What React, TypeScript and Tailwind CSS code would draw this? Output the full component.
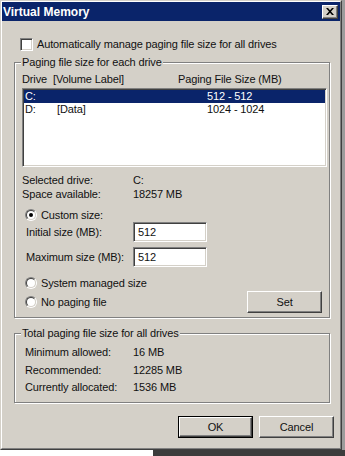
import React from "react";

const raised =
  "border border-t-white border-l-white border-r-[#404040] border-b-[#404040] shadow-[inset_-1px_-1px_0_#808080] bg-[#D4D0C8]";
const sunken =
  "border border-t-[#808080] border-l-[#808080] border-r-white border-b-white shadow-[inset_1px_1px_0_#404040,inset_-1px_-1px_0_#D4D0C8]";

function Radio({ checked }: { checked?: boolean }) {
  return (
    <div className="w-[12px] h-[12px] rounded-full border border-t-[#808080] border-l-[#808080] border-r-white border-b-white shrink-0">
      <div className="w-full h-full rounded-full border border-t-[#404040] border-l-[#404040] border-r-[#D4D0C8] border-b-[#D4D0C8] bg-white flex items-center justify-center">
        {checked && <div className="w-[4px] h-[4px] rounded-full bg-black" />}
      </div>
    </div>
  );
}

function Group({
  title,
  className,
  children,
}: {
  title: string;
  className: string;
  children: React.ReactNode;
}) {
  return (
    <div
      className={
        "relative border border-[#808080] shadow-[inset_1px_1px_0_#fff,1px_1px_0_#fff] flex flex-col " +
        className
      }
    >
      <span className="absolute left-[6px] top-[-7px] px-[1px] bg-[#D4D0C8] leading-[13px]">
        {title}
      </span>
      {children}
    </div>
  );
}

export default function App() {
  return (
    <div
      className="w-[345px] h-[456px] flex flex-col bg-[#9c9c9c] text-[#111] text-[11px] leading-[13px] tracking-[-0.13px] overflow-hidden"
      style={{ fontFamily: '"Liberation Sans", Arial, sans-serif' }}
    >
      <div className="flex h-[450px]">
        <div className="w-[342px] h-[450px] bg-[#D4D0C8] border border-t-[#D4D0C8] border-l-[#D4D0C8] border-r-[#404040] border-b-[#404040]">
          <div className="h-full border border-t-white border-l-white border-r-[#808080] border-b-[#808080] flex flex-col">
            {/* Title bar */}
            <div className="h-[19px] bg-[#0A246A] flex items-center justify-between pl-[1px] pr-[2px]">
              <span className="text-white font-bold text-[12px] leading-[14px] tracking-normal">
                Virtual Memory
              </span>
              <div className={"w-[16px] h-[14px] flex items-center justify-center " + raised}>
                <svg width="8" height="7" viewBox="0 0 8 7">
                  <path
                    d="M0 0h2l2 2.3L6 0h2L5 3.5 8 7H6L4 4.7 2 7H0l3-3.5z"
                    fill="#000"
                  />
                </svg>
              </div>
            </div>

            {/* Auto manage */}
            <div className="mt-[16px] h-[14px] pl-[18px] flex items-center gap-[4px]">
              <div className={"w-[13px] h-[13px] bg-white " + sunken} />
              <span>Automatically manage paging file size for all drives</span>
            </div>

            {/* Group 1 */}
            <Group
              title="Paging file size for each drive"
              className="mt-[11px] ml-[12px] w-[316px] h-[256px] pl-[7px] pr-[7px]"
            >
              <div className="mt-[10px] h-[12px] flex items-center">
                <span className="w-[31px]">Drive</span>
                <span className="w-[125px]">[Volume Label]</span>
                <span>Paging File Size (MB)</span>
              </div>
              <div className={"mt-[3px] h-[79px] w-[305px] bg-white pt-[1px] flex flex-col " + sunken}>
                <div className="mx-[1px] h-[13px] bg-[#0A246A] text-white flex items-center pl-[1px]">
                  <span className="w-[32px]">C:</span>
                  <span className="w-[150px]"></span>
                  <span>512 - 512</span>
                </div>
                <div className="mx-[1px] h-[13px] flex items-center pl-[1px]">
                  <span className="w-[32px]">D:</span>
                  <span className="w-[150px]">[Data]</span>
                  <span>1024 - 1024</span>
                </div>
              </div>
              <div className="mt-[6px] h-[14px] flex items-center">
                <span className="w-[111px]">Selected drive:</span>
                <span>C:</span>
              </div>
              <div className="h-[14px] flex items-center">
                <span className="w-[111px]">Space available:</span>
                <span>18257 MB</span>
              </div>
              <div className="mt-[7px] h-[14px] flex items-center gap-[4px] pl-[3px]">
                <Radio checked />
                <span>Custom size:</span>
              </div>
              <div className="h-[20px] flex items-center pl-[4px]">
                <span className="w-[107px]">Initial size (MB):</span>
                <div className={"w-[74px] h-[20px] bg-white flex items-center pl-[4px] " + sunken}>
                  512
                </div>
              </div>
              <div className="mt-[5px] h-[20px] flex items-center pl-[4px]">
                <span className="w-[107px]">Maximum size (MB):</span>
                <div className={"w-[74px] h-[20px] bg-white flex items-center pl-[4px] " + sunken}>
                  512
                </div>
              </div>
              <div className="mt-[9px] h-[14px] flex items-center gap-[4px] pl-[3px]">
                <Radio />
                <span>System managed size</span>
              </div>
              <div className="mt-[1px] h-[22px] flex items-center justify-between pl-[3px]">
                <div className="flex items-center gap-[4px]">
                  <Radio />
                  <span>No paging file</span>
                </div>
                <div className={"w-[75px] h-[22px] flex items-center justify-center " + raised}>
                  Set
                </div>
              </div>
            </Group>

            {/* Group 2 */}
            <Group
              title="Total paging file size for all drives"
              className="mt-[15px] ml-[12px] w-[316px] h-[70px] pl-[10px]"
            >
              <div className="mt-[11px] h-[14px] flex items-center">
                <span className="w-[108px]">Minimum allowed:</span>
                <span>16 MB</span>
              </div>
              <div className="mt-[4px] h-[14px] flex items-center">
                <span className="w-[108px]">Recommended:</span>
                <span>12285 MB</span>
              </div>
              <div className="mt-[3px] h-[14px] flex items-center">
                <span className="w-[108px]">Currently allocated:</span>
                <span>1536 MB</span>
              </div>
            </Group>

            {/* Buttons */}
            <div className="mt-[13px] h-[22px] flex justify-end gap-[6px] pr-[6px]">
              <div className="w-[75px] h-[22px] border border-black">
                <div className={"w-full h-full flex items-center justify-center " + raised}>
                  OK
                </div>
              </div>
              <div className={"w-[75px] h-[22px] flex items-center justify-center " + raised}>
                Cancel
              </div>
            </div>
          </div>
        </div>
        <div className="flex-1 bg-[#9c9c9c]" />
      </div>
      <div className="h-[6px] flex">
        <div className="w-[153px] bg-white" />
        <div className="flex-1 bg-[#3c3c3c]" />
      </div>
    </div>
  );
}
